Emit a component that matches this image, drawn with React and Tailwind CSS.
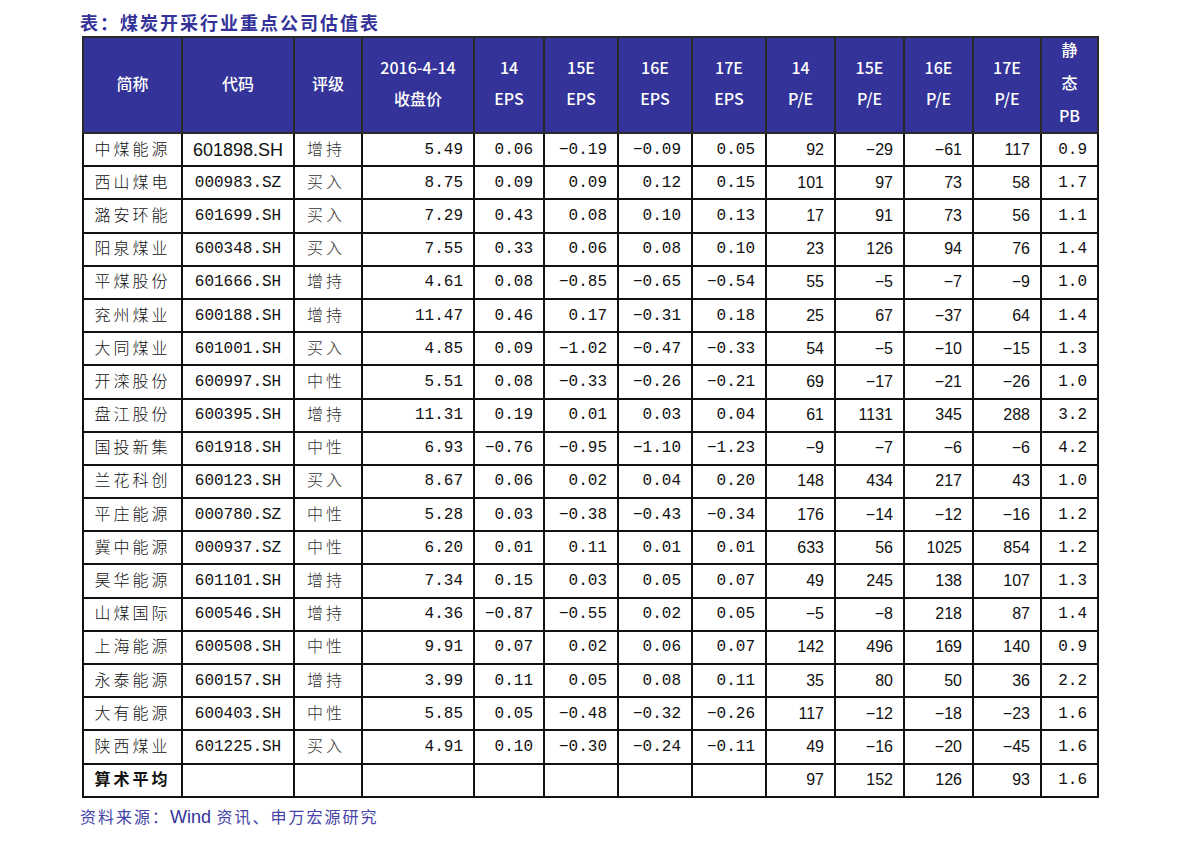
import React from 'react';

const cols = [99, 112, 68, 112, 70, 74, 74, 74, 69, 69, 69, 68, 57];

const header = [
  ['简称'],
  ['代码'],
  ['评级'],
  ['2016-4-14', '收盘价'],
  ['14', 'EPS'],
  ['15E', 'EPS'],
  ['16E', 'EPS'],
  ['17E', 'EPS'],
  ['14', 'P/E'],
  ['15E', 'P/E'],
  ['16E', 'P/E'],
  ['17E', 'P/E'],
  ['静', '态', 'PB'],
];

const rows = [
  ['中煤能源', '601898.SH', '增持', '5.49', '0.06', '−0.19', '−0.09', '0.05', '92', '−29', '−61', '117', '0.9'],
  ['西山煤电', '000983.SZ', '买入', '8.75', '0.09', '0.09', '0.12', '0.15', '101', '97', '73', '58', '1.7'],
  ['潞安环能', '601699.SH', '买入', '7.29', '0.43', '0.08', '0.10', '0.13', '17', '91', '73', '56', '1.1'],
  ['阳泉煤业', '600348.SH', '买入', '7.55', '0.33', '0.06', '0.08', '0.10', '23', '126', '94', '76', '1.4'],
  ['平煤股份', '601666.SH', '增持', '4.61', '0.08', '−0.85', '−0.65', '−0.54', '55', '−5', '−7', '−9', '1.0'],
  ['兖州煤业', '600188.SH', '增持', '11.47', '0.46', '0.17', '−0.31', '0.18', '25', '67', '−37', '64', '1.4'],
  ['大同煤业', '601001.SH', '买入', '4.85', '0.09', '−1.02', '−0.47', '−0.33', '54', '−5', '−10', '−15', '1.3'],
  ['开滦股份', '600997.SH', '中性', '5.51', '0.08', '−0.33', '−0.26', '−0.21', '69', '−17', '−21', '−26', '1.0'],
  ['盘江股份', '600395.SH', '增持', '11.31', '0.19', '0.01', '0.03', '0.04', '61', '1131', '345', '288', '3.2'],
  ['国投新集', '601918.SH', '中性', '6.93', '−0.76', '−0.95', '−1.10', '−1.23', '−9', '−7', '−6', '−6', '4.2'],
  ['兰花科创', '600123.SH', '买入', '8.67', '0.06', '0.02', '0.04', '0.20', '148', '434', '217', '43', '1.0'],
  ['平庄能源', '000780.SZ', '中性', '5.28', '0.03', '−0.38', '−0.43', '−0.34', '176', '−14', '−12', '−16', '1.2'],
  ['冀中能源', '000937.SZ', '中性', '6.20', '0.01', '0.11', '0.01', '0.01', '633', '56', '1025', '854', '1.2'],
  ['昊华能源', '601101.SH', '增持', '7.34', '0.15', '0.03', '0.05', '0.07', '49', '245', '138', '107', '1.3'],
  ['山煤国际', '600546.SH', '增持', '4.36', '−0.87', '−0.55', '0.02', '0.05', '−5', '−8', '218', '87', '1.4'],
  ['上海能源', '600508.SH', '中性', '9.91', '0.07', '0.02', '0.06', '0.07', '142', '496', '169', '140', '0.9'],
  ['永泰能源', '600157.SH', '增持', '3.99', '0.11', '0.05', '0.08', '0.11', '35', '80', '50', '36', '2.2'],
  ['大有能源', '600403.SH', '中性', '5.85', '0.05', '−0.48', '−0.32', '−0.26', '117', '−12', '−18', '−23', '1.6'],
  ['陕西煤业', '601225.SH', '买入', '4.91', '0.10', '−0.30', '−0.24', '−0.11', '49', '−16', '−20', '−45', '1.6'],
];

const avg = ['算术平均', '', '', '', '', '', '', '', '97', '152', '126', '93', '1.6'];

const cjk = "font-['Noto_Sans_CJK_SC',sans-serif]";
const mono = "font-['Liberation_Mono',monospace]";
const arial = "font-['Liberation_Sans','Noto_Sans_CJK_SC',sans-serif]";

// per-column cell styling for body rows
const cellClass = (i, first) => {
  if (i === 0) return `${cjk} font-light text-center tracking-[3px] pb-[4px]`;
  if (i === 1) return first ? `${arial} text-center text-[18px]` : `${mono} text-center text-[15px]`;
  if (i === 2) return `${cjk} font-light text-left pl-[12px] tracking-[3px] text-[#333] pb-[4px]`;
  if (i >= 8 && i <= 11) return `${arial} text-right pr-[10px] text-[16px]`;
  return `${mono} text-right pr-[10px] text-[16px]`;
};

export default function App() {
  return (
    <div className="w-[1191px] h-[848px] bg-white pt-[8px] pl-[82px]">
      <div className={`${cjk} text-[18px] font-bold text-[#333399] leading-[28px] tracking-[2px] -ml-[2px]`}>
        表：煤炭开采行业重点公司估值表
      </div>
      <table className="border-collapse table-fixed w-[1015px] mt-0">
        <colgroup>
          {cols.map((w, i) => (
            <col key={i} style={{ width: w }} />
          ))}
        </colgroup>
        <thead>
          <tr className="h-[96px] bg-[#333399]">
            {header.map((lines, i) => (
              <th
                key={i}
                className={`border-2 border-[#2a2a2a] p-0 text-white font-medium text-[16px] ${cjk} align-middle text-center`}
              >
                <div className={lines.length === 3 ? 'leading-[33px] -mt-[6px]' : 'leading-[31px] -mt-[4px]'}>
                  {lines.map((l, j) => (
                    <div key={j}>{l}</div>
                  ))}
                </div>
              </th>
            ))}
          </tr>
        </thead>
        <tbody className="text-[#111]">
          {rows.map((r, ri) => (
            <tr key={ri} className="h-[33.2px]">
              {r.map((v, i) => (
                <td
                  key={i}
                  className={`border-2 border-[#111] p-0 text-[16px] leading-[20px] whitespace-nowrap ${cellClass(i, ri === 0)}`}
                >
                  {v}
                </td>
              ))}
            </tr>
          ))}
          <tr className="h-[33.2px]">
            {avg.map((v, i) => (
              <td
                key={i}
                className={`border-2 border-[#111] p-0 text-[16px] leading-[20px] whitespace-nowrap ${
                  i === 0 ? `${cjk} font-bold text-center tracking-[3px] pb-[4px]` : cellClass(i, false)
                }`}
              >
                {v}
              </td>
            ))}
          </tr>
        </tbody>
      </table>
      <div className={`${cjk} mt-[6px] text-[16px] leading-[24px] text-[#4444a8] tracking-[2px] -ml-[2px]`}>
        资料来源：<span className={`${arial} text-[18px] tracking-normal text-[#333399]`}>Wind</span> 资讯、申万宏源研究
      </div>
    </div>
  );
}
